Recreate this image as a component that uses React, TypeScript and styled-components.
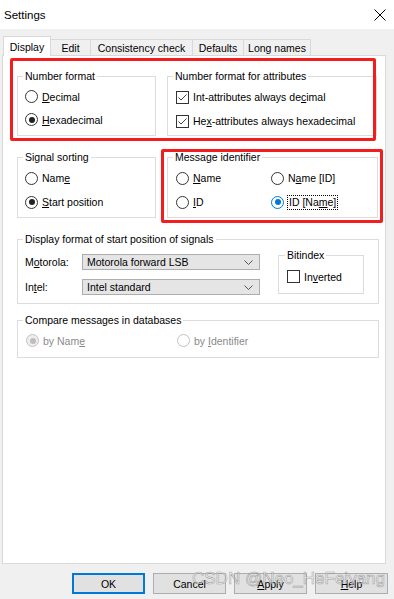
import styled, { createGlobalStyle } from "styled-components";

const GlobalStyle = createGlobalStyle`
  html, body { margin: 0; padding: 0; background: #f0f0f0; }
`;

const Window = styled.div`
  position: relative;
  width: 394px;
  height: 599px;
  overflow: hidden;
  background: #f0f0f0;
  font-family: "Liberation Sans", Arial, sans-serif;
  font-size: 10.5px;
  color: #000;
`;

const TitleBar = styled.div`
  height: 29px;
  background: #fff;
  display: flex;
  align-items: center;
  justify-content: space-between;
  padding: 0 8px 0 4px;
`;

const Title = styled.span`
  font-size: 11.5px;
`;

const Body = styled.div`
  padding: 7px 0 0 2px;
`;

const TabStrip = styled.div`
  display: flex;
  align-items: flex-end;
  height: 19px;
  padding-left: 1px;
`;

const Tab = styled.div<{ $w: number; $active?: boolean }>`
  box-sizing: border-box;
  position: relative;
  z-index: ${(p) => (p.$active ? 1 : 0)};
  width: ${(p) => p.$w}px;
  height: ${(p) => (p.$active ? 20 : 16)}px;
  margin-bottom: ${(p) => (p.$active ? -1 : 0)}px;
  margin-left: -1px;
  &:first-child { margin-left: 0; }
  display: flex;
  align-items: center;
  justify-content: center;
  border: 1px solid #d9d9d9;
  border-bottom: none;
  background: ${(p) => (p.$active ? "#fff" : "#f0f0f0")};
`;

const Panel = styled.div`
  box-sizing: border-box;
  width: 384px;
  height: 509px;
  background: #fff;
  border: 1px solid #d9d9d9;
  padding: 20px 0 0 14px;
  display: flex;
  flex-direction: column;
`;

const Row = styled.div<{ $top?: number }>`
  display: flex;
  gap: 11px;
  margin-top: ${(p) => p.$top ?? 0}px;
`;

const Group = styled.div<{ $w: number; $h: number; $top?: number; $left?: number }>`
  position: relative;
  box-sizing: border-box;
  width: ${(p) => p.$w}px;
  height: ${(p) => p.$h}px;
  margin-top: ${(p) => p.$top ?? 0}px;
  margin-left: ${(p) => p.$left ?? 0}px;
  border: 1px solid #dcdcdc;
  flex-shrink: 0;
`;

const Caption = styled.span<{ $left?: number }>`
  position: absolute;
  top: -7px;
  left: ${(p) => p.$left ?? 5}px;
  padding: 0 2px;
  background: #fff;
  line-height: 13px;
  white-space: nowrap;
`;

const Options = styled.div<{ $pt?: number; $pl?: number; $rowH?: number }>`
  display: flex;
  flex-direction: column;
  padding: ${(p) => p.$pt ?? 8}px 0 0 ${(p) => p.$pl ?? 7}px;
  & > * { height: ${(p) => p.$rowH ?? 23}px; }
`;

const OptionGrid = styled.div<{ $col: number; $pt?: number; $rowH?: number }>`
  display: grid;
  grid-template-columns: ${(p) => p.$col}px auto;
  grid-auto-rows: ${(p) => p.$rowH ?? 24}px;
  padding: ${(p) => p.$pt ?? 8}px 0 0 8px;
`;

const Option = styled.label<{ $disabled?: boolean }>`
  display: flex;
  align-items: center;
  gap: 4px;
  white-space: nowrap;
  color: ${(p) => (p.$disabled ? "#8a8a8a" : "#000")};
`;

const Key = styled.span`
  text-decoration: underline;
  text-underline-offset: 1px;
`;

const Focus = styled.span`
  outline: 1px dotted #000;
  outline-offset: 0;
  padding: 0 1px;
  line-height: 13px;
`;

type Tone = "black" | "blue" | "disabled";

const Circle = styled.span<{ $tone: Tone; $checked?: boolean }>`
  box-sizing: border-box;
  width: 13px;
  height: 13px;
  border-radius: 50%;
  flex-shrink: 0;
  display: flex;
  align-items: center;
  justify-content: center;
  border: 1px solid
    ${(p) => (p.$tone === "blue" ? "#0078d7" : p.$tone === "disabled" ? "#c2c2c2" : "#333")};
  background: ${(p) => (p.$tone === "disabled" && p.$checked ? "#eeeeee" : "#fff")};
  &::after {
    content: "";
    display: ${(p) => (p.$checked ? "block" : "none")};
    width: 6px;
    height: 6px;
    border-radius: 50%;
    background: ${(p) => (p.$tone === "blue" ? "#0078d7" : p.$tone === "disabled" ? "#bdbdbd" : "#222")};
  }
`;

const Box = styled.span`
  box-sizing: border-box;
  width: 13px;
  height: 13px;
  flex-shrink: 0;
  border: 1px solid #333;
  background: #fff;
  display: flex;
  align-items: center;
  justify-content: center;
`;

function Radio({ checked, tone = "black" }: { checked?: boolean; tone?: Tone }) {
  return <Circle $tone={tone} $checked={checked} />;
}

function Check({ checked }: { checked?: boolean }) {
  return (
    <Box>
      {checked && (
        <svg width="11" height="11" viewBox="0 0 11 11">
          <polyline points="1.5,5.5 4,8 9.5,2.5" fill="none" stroke="#444" strokeWidth="1" />
        </svg>
      )}
    </Box>
  );
}

const FormRow = styled.div`
  display: flex;
  padding: 14px 0 0 7px;
`;

const FormGrid = styled.div`
  display: grid;
  grid-template-columns: 57px 178px;
  grid-auto-rows: 16px;
  row-gap: 9px;
  align-items: center;
`;

const Combo = styled.div`
  box-sizing: border-box;
  height: 100%;
  border: 1px solid #adadad;
  background: #e5e5e5;
  display: flex;
  align-items: center;
  justify-content: space-between;
  padding: 0 6px 0 4px;
`;

const Buttons = styled.div`
  display: flex;
  justify-content: flex-end;
  gap: 8px;
  padding-right: 6px;
  margin-top: 9px;
`;

const Button = styled.button<{ $default?: boolean }>`
  box-sizing: border-box;
  width: 73px;
  height: 21px;
  padding: 0;
  background: #e1e1e1;
  border: ${(p) => (p.$default ? "2px solid #0078d7" : "1px solid #adadad")};
  font: inherit;
  color: #000;
`;

const Highlight = styled.div<{ $x: number; $y: number; $w: number; $h: number }>`
  position: absolute;
  left: ${(p) => p.$x}px;
  top: ${(p) => p.$y}px;
  width: ${(p) => p.$w}px;
  height: ${(p) => p.$h}px;
  box-sizing: border-box;
  border: 3px solid #f31d1d;
  border-radius: 2px;
  pointer-events: none;
`;

const Watermark = styled.div`
  position: absolute;
  left: 192px;
  top: 569px;
  font-size: 17px;
  line-height: 20px;
  color: rgba(255, 255, 255, 0.5);
  -webkit-text-stroke: 0.6px rgba(110, 110, 110, 0.6);
  pointer-events: none;
  white-space: nowrap;
`;

function Chevron() {
  return (
    <svg width="9" height="5" viewBox="0 0 9 5">
      <polyline points="0.5,0.5 4.5,4.5 8.5,0.5" fill="none" stroke="#555" strokeWidth="1" />
    </svg>
  );
}

export default function App() {
  return (
    <Window>
      <GlobalStyle />
      <TitleBar>
        <Title>Settings</Title>
        <svg width="12" height="12" viewBox="0 0 12 12">
          <path d="M0.5 0.5 L11.5 11.5 M11.5 0.5 L0.5 11.5" stroke="#000" strokeWidth="1" />
        </svg>
      </TitleBar>

      <Body>
        <TabStrip>
          <Tab $w={48} $active>Display</Tab>
          <Tab $w={41}>Edit</Tab>
          <Tab $w={103}>Consistency check</Tab>
          <Tab $w={52}>Defaults</Tab>
          <Tab $w={68}>Long names</Tab>
        </TabStrip>

        <Panel>
          <Row>
            <Group $w={139} $h={60}>
              <Caption>Number format</Caption>
              <Options>
                <Option><Radio /><span><Key>D</Key>ecimal</span></Option>
                <Option><Radio checked /><span><Key>H</Key>exadecimal</span></Option>
              </Options>
            </Group>
            <Group $w={210} $h={60}>
              <Caption>Number format for attributes</Caption>
              <Options $pl={8} $rowH={24}>
                <Option><Check checked /><span>Int-attributes always de<Key>c</Key>imal</span></Option>
                <Option><Check checked /><span>He<Key>x</Key>-attributes always hexadecimal</span></Option>
              </Options>
            </Group>
          </Row>

          <Row $top={21}>
            <Group $w={139} $h={61}>
              <Caption>Signal sorting</Caption>
              <Options $rowH={24}>
                <Option><Radio /><span>Nam<Key>e</Key></span></Option>
                <Option><Radio checked /><span><Key>S</Key>tart position</span></Option>
              </Options>
            </Group>
            <Group $w={211} $h={61}>
              <Caption>Message identifier</Caption>
              <OptionGrid $col={95}>
                <Option><Radio /><span><Key>N</Key>ame</span></Option>
                <Option><Radio /><span>N<Key>a</Key>me [ID]</span></Option>
                <Option><Radio /><span><Key>I</Key>D</span></Option>
                <Option><Radio checked tone="blue" /><Focus>ID [Na<Key>m</Key>e]</Focus></Option>
              </OptionGrid>
            </Group>
          </Row>

          <Group $w={362} $h={65} $top={21}>
            <Caption>Display format of start position of signals</Caption>
            <FormRow>
              <FormGrid>
                <span>M<Key>o</Key>torola:</span>
                <Combo>Motorola forward LSB<Chevron /></Combo>
                <span>In<Key>t</Key>el:</span>
                <Combo>Intel standard<Chevron /></Combo>
              </FormGrid>
              <Group $w={86} $h={39} $top={1} $left={18}>
                <Caption $left={6}>Bitindex</Caption>
                <Options $pt={14} $pl={8} $rowH={13}>
                  <Option><Check /><span>In<Key>v</Key>erted</span></Option>
                </Options>
              </Group>
            </FormRow>
          </Group>

          <Group $w={362} $h={38} $top={16}>
            <Caption>Compare messages in databases</Caption>
            <OptionGrid $col={151} $rowH={23}>
              <Option $disabled><Radio checked tone="disabled" /><span>by Nam<Key>e</Key></span></Option>
              <Option $disabled><Radio tone="disabled" /><span>by <Key>I</Key>dentifier</span></Option>
            </OptionGrid>
          </Group>
        </Panel>

        <Buttons>
          <Button $default>OK</Button>
          <Button>Cancel</Button>
          <Button><Key>A</Key>pply</Button>
          <Button><Key>H</Key>elp</Button>
        </Buttons>
      </Body>

      <Highlight $x={10} $y={58} $w={366} $h={83} />
      <Highlight $x={161} $y={149} $w={222} $h={74} />
      <Watermark>CSDN @Neo_HeFeiyang</Watermark>
    </Window>
  );
}
